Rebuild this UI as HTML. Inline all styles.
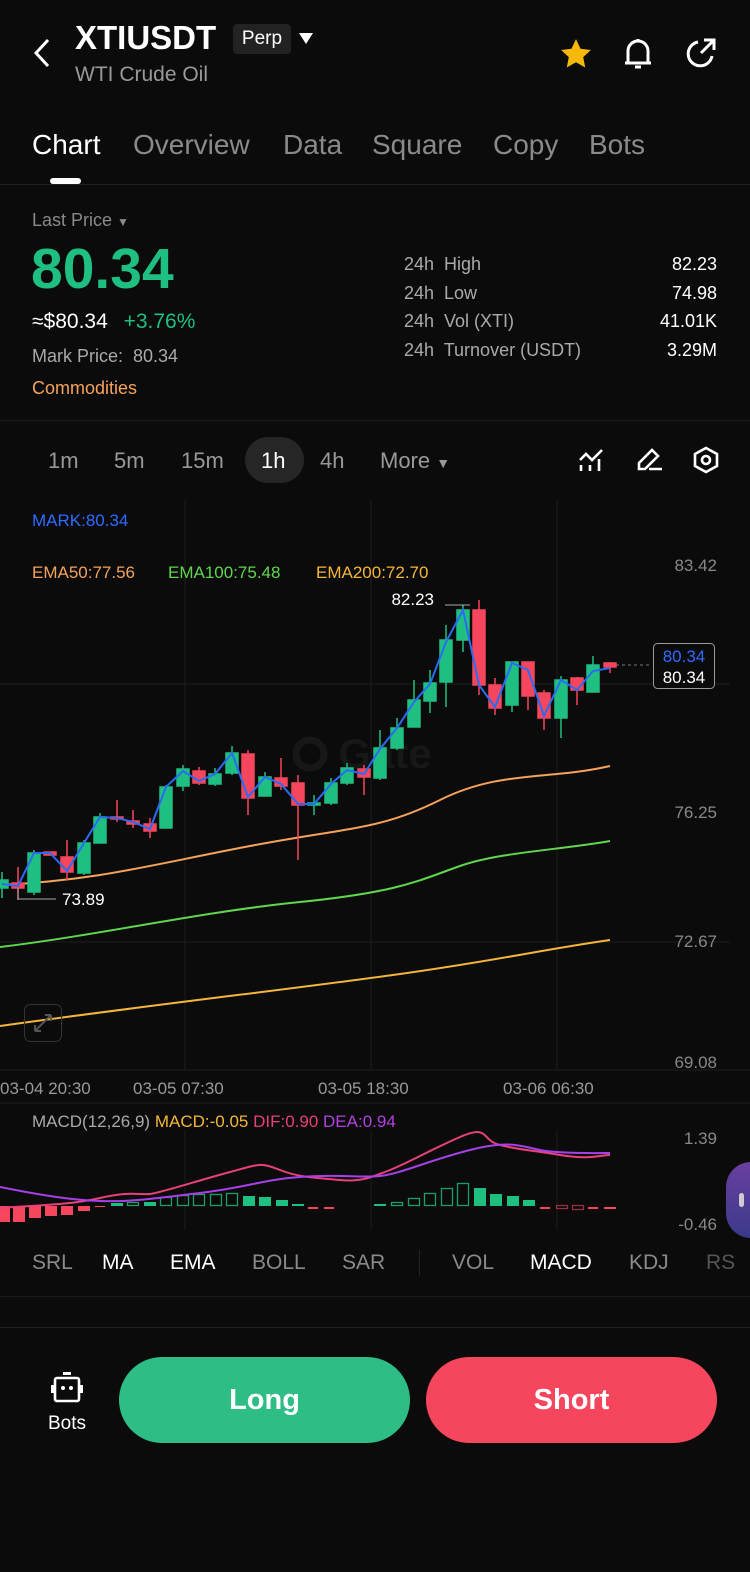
<!DOCTYPE html>
<html><head><meta charset="utf-8"><style>
*{margin:0;padding:0;box-sizing:border-box}
body{width:750px;height:1572px;background:#0b0b0b;font-family:"Liberation Sans",sans-serif;color:#fff;position:relative;overflow:hidden}
.a{position:absolute;white-space:nowrap}
.g{color:#8a8a8a}
</style></head><body>
<svg class="a" style="left:30px;top:36px" width="24" height="34" viewBox="0 0 24 34"><path d="M18 4L6 17l12 13" stroke="#fff" stroke-width="3" fill="none"/></svg>
<div class="a" style="left:75px;top:19px;font-size:33px;font-weight:bold">XTIUSDT</div>
<div class="a" style="left:233px;top:24px;width:58px;height:30px;background:#222;border-radius:4px;font-size:19px;line-height:30px;text-align:center">Perp</div>
<div class="a" style="left:299px;top:33px;width:0;height:0;border-left:7px solid transparent;border-right:7px solid transparent;border-top:11px solid #fff"></div>
<div class="a g" style="left:75px;top:63px;font-size:21px;color:#999">WTI Crude Oil</div>
<svg class="a" style="left:558px;top:37px" width="36" height="34" viewBox="0 0 24 24"><path d="M12 1.5l3.2 6.8 7.3.9-5.4 5 1.4 7.3L12 17.8l-6.5 3.7 1.4-7.3-5.4-5 7.3-.9z" fill="#f6b80b"/></svg>
<svg class="a" style="left:622px;top:36px" width="32" height="36" viewBox="0 0 32 36"><path d="M6 27V15a10 10 0 0120 0v12zM3 27h26M13 31h6M16 3v2" stroke="#fff" stroke-width="3" fill="none"/></svg>
<svg class="a" style="left:684px;top:36px" width="34" height="34" viewBox="0 0 34 34"><path d="M14 6a12 12 0 1014 14" stroke="#fff" stroke-width="3" fill="none"/><path d="M17 17L29 5M20 4h10v10" stroke="#fff" stroke-width="3" fill="none"/></svg>
<div class="a" style="left:32px;top:129px;font-size:28px">Chart</div>
<div class="a g" style="left:133px;top:129px;font-size:28px">Overview</div>
<div class="a g" style="left:283px;top:129px;font-size:28px">Data</div>
<div class="a g" style="left:372px;top:129px;font-size:28px">Square</div>
<div class="a g" style="left:493px;top:129px;font-size:28px">Copy</div>
<div class="a g" style="left:589px;top:129px;font-size:28px">Bots</div>
<div class="a" style="left:50px;top:178px;width:31px;height:6px;background:#fff;border-radius:3px"></div>
<div class="a" style="left:0;top:184px;width:750px;height:1px;background:#222"></div>
<div class="a g" style="left:32px;top:210px;font-size:18px">Last Price <span style="font-size:12px">▼</span></div>
<div class="a" style="left:31px;top:236px;font-size:57px;font-weight:bold;color:#1fbf82">80.34</div>
<div class="a" style="left:32px;top:310px;font-size:21px">≈$80.34 <span style="color:#1fbf82;margin-left:10px">+3.76%</span></div>
<div class="a g" style="left:32px;top:346px;font-size:18px;color:#aaa">Mark Price:&nbsp; 80.34</div>
<div class="a" style="left:32px;top:378px;font-size:18px;color:#f5a35c">Commodities</div>
<div class="a" style="left:404px;top:250px;font-size:18px;color:#aaa;line-height:28.5px">24h&nbsp; High<br>24h&nbsp; Low<br>24h&nbsp; Vol (XTI)<br>24h&nbsp; Turnover (USDT)</div>
<div class="a" style="right:33px;top:250px;font-size:18px;line-height:28.5px;text-align:right">82.23<br>74.98<br>41.01K<br>3.29M</div>
<div class="a" style="left:0;top:420px;width:750px;height:1px;background:#1c1c1c"></div>
<div class="a" style="left:245px;top:437px;width:59px;height:46px;background:#262626;border-radius:23px"></div>
<div class="a g" style="left:48px;top:448px;font-size:22px;color:#999">1m</div>
<div class="a g" style="left:114px;top:448px;font-size:22px;color:#999">5m</div>
<div class="a g" style="left:181px;top:448px;font-size:22px;color:#999">15m</div>
<div class="a" style="left:261px;top:448px;font-size:22px">1h</div>
<div class="a g" style="left:320px;top:448px;font-size:22px;color:#999">4h</div>
<div class="a g" style="left:380px;top:448px;font-size:22px;color:#999">More <span style="font-size:14px">▼</span></div>
<svg class="a" style="left:578px;top:448px" width="28" height="24" viewBox="0 0 28 24"><path d="M2 12l6-6 6 6 10-10M3 17v6M12 17v6M21 11v12" stroke="#fff" stroke-width="2.6" fill="none"/></svg>
<svg class="a" style="left:636px;top:447px" width="28" height="26" viewBox="0 0 28 26"><path d="M3 22v-6L16 3l6 6L9 22zM13 22h13" stroke="#fff" stroke-width="2.6" fill="none"/></svg>
<svg class="a" style="left:692px;top:446px" width="28" height="28" viewBox="0 0 28 28"><path d="M14 2l11 6v12l-11 6-11-6V8z" stroke="#fff" stroke-width="2.6" fill="none"/><circle cx="14" cy="14" r="4" stroke="#fff" stroke-width="2.6" fill="none"/></svg>
<svg class="a" style="left:0;top:495px" width="750" height="740" viewBox="0 495 750 740" font-family="Liberation Sans">
<g stroke="#1c1c1c" stroke-width="1"><line x1="185" y1="500" x2="185" y2="1070"/><line x1="371" y1="500" x2="371" y2="1070"/><line x1="557" y1="500" x2="557" y2="1070"/><line x1="0" y1="684" x2="730" y2="684"/><line x1="0" y1="942" x2="730" y2="942"/><line x1="0" y1="1070" x2="750" y2="1070"/><line x1="0" y1="1103" x2="750" y2="1103"/><line x1="185" y1="1130" x2="185" y2="1230"/><line x1="371" y1="1130" x2="371" y2="1230"/><line x1="557" y1="1130" x2="557" y2="1230"/></g>
<circle cx="310" cy="754" r="14" stroke="#171717" stroke-width="7" fill="none"/>
<text x="385" y="768" font-size="42" font-weight="bold" fill="#171717" text-anchor="middle">Gate</text>
<text x="32" y="526" font-size="17" fill="#2f6bff">MARK:80.34</text>
<text x="32" y="578" font-size="17" fill="#f5a35c">EMA50:77.56</text>
<text x="168" y="578" font-size="17" fill="#5fd64e">EMA100:75.48</text>
<text x="316" y="578" font-size="17" fill="#f4b63a">EMA200:72.70</text>
<g font-size="17" fill="#888" text-anchor="end"><text x="717" y="571">83.42</text><text x="717" y="818">76.25</text><text x="717" y="947">72.67</text><text x="717" y="1068">69.08</text><text x="717" y="1144">1.39</text><text x="717" y="1230">-0.46</text></g>
<g font-size="17" fill="#999"><text x="0" y="1094">03-04 20:30</text><text x="133" y="1094">03-05 07:30</text><text x="318" y="1094">03-05 18:30</text><text x="503" y="1094">03-06 06:30</text></g>
<path d="M0 885 C100 880 150 865 250 846 S380 830 440 800 S550 780 610 766" stroke="#f5a35c" stroke-width="2" fill="none"/>
<path d="M0 947 C100 935 200 912 300 902 S420 880 460 866 S560 850 610 841" stroke="#5fd64e" stroke-width="2" fill="none"/>
<path d="M0 1026 C150 1005 300 988 400 974 S540 950 610 940" stroke="#f4b63a" stroke-width="2" fill="none"/>
<g stroke-width="1.5">
<g fill="#1fbf82" stroke="#1fbf82">
<line x1="2" y1="872" x2="2" y2="898"/><rect x="-4" y="880" width="12" height="8"/>
<line x1="34" y1="850" x2="34" y2="895"/><rect x="28" y="853" width="12" height="39"/>
<line x1="84" y1="840" x2="84" y2="875"/><rect x="78" y="843" width="12" height="30"/>
<line x1="100" y1="813" x2="100" y2="843"/><rect x="94" y="817" width="12" height="26"/>
<line x1="166" y1="785" x2="166" y2="828"/><rect x="160" y="787" width="12" height="41"/>
<line x1="183" y1="765" x2="183" y2="791"/><rect x="177" y="769" width="12" height="17"/>
<line x1="215" y1="768" x2="215" y2="786"/><rect x="209" y="774" width="12" height="10"/>
<line x1="232" y1="746" x2="232" y2="775"/><rect x="226" y="753" width="12" height="20"/>
<line x1="265" y1="772" x2="265" y2="796"/><rect x="259" y="777" width="12" height="19"/>
<line x1="314" y1="795" x2="314" y2="815"/><rect x="308" y="803" width="12" height="2"/>
<line x1="331" y1="778" x2="331" y2="805"/><rect x="325" y="783" width="12" height="20"/>
<line x1="347" y1="763" x2="347" y2="785"/><rect x="341" y="768" width="12" height="15"/>
<line x1="380" y1="730" x2="380" y2="780"/><rect x="374" y="748" width="12" height="30"/>
<line x1="397" y1="718" x2="397" y2="750"/><rect x="391" y="728" width="12" height="20"/>
<line x1="414" y1="680" x2="414" y2="727"/><rect x="408" y="700" width="12" height="27"/>
<line x1="430" y1="670" x2="430" y2="713"/><rect x="424" y="683" width="12" height="18"/>
<line x1="446" y1="625" x2="446" y2="707"/><rect x="440" y="640" width="12" height="42"/>
<line x1="463" y1="605" x2="463" y2="652"/><rect x="457" y="610" width="12" height="30"/>
<line x1="512" y1="662" x2="512" y2="712"/><rect x="506" y="662" width="12" height="43"/>
<line x1="561" y1="676" x2="561" y2="738"/><rect x="555" y="680" width="12" height="38"/>
<line x1="593" y1="656" x2="593" y2="692"/><rect x="587" y="665" width="12" height="27"/>
</g>
<g fill="#f6465d" stroke="#f6465d">
<line x1="18" y1="867" x2="18" y2="900"/><rect x="12" y="883" width="12" height="5"/>
<line x1="50" y1="852" x2="50" y2="856"/><rect x="44" y="852" width="12" height="3"/>
<line x1="67" y1="840" x2="67" y2="880"/><rect x="61" y="857" width="12" height="15"/>
<line x1="117" y1="800" x2="117" y2="822"/><rect x="111" y="817" width="12" height="2"/>
<line x1="133" y1="810" x2="133" y2="828"/><rect x="127" y="821" width="12" height="3"/>
<line x1="150" y1="818" x2="150" y2="838"/><rect x="144" y="824" width="12" height="7"/>
<line x1="199" y1="767" x2="199" y2="785"/><rect x="193" y="771" width="12" height="12"/>
<line x1="248" y1="750" x2="248" y2="815"/><rect x="242" y="754" width="12" height="44"/>
<line x1="281" y1="758" x2="281" y2="790"/><rect x="275" y="778" width="12" height="8"/>
<line x1="298" y1="775" x2="298" y2="860"/><rect x="292" y="783" width="12" height="22"/>
<line x1="364" y1="765" x2="364" y2="795"/><rect x="358" y="769" width="12" height="8"/>
<line x1="479" y1="600" x2="479" y2="695"/><rect x="473" y="610" width="12" height="75"/>
<line x1="495" y1="678" x2="495" y2="715"/><rect x="489" y="685" width="12" height="23"/>
<line x1="528" y1="662" x2="528" y2="710"/><rect x="522" y="662" width="12" height="34"/>
<line x1="544" y1="690" x2="544" y2="730"/><rect x="538" y="693" width="12" height="25"/>
<line x1="577" y1="677" x2="577" y2="705"/><rect x="571" y="678" width="12" height="12"/>
<line x1="610" y1="662" x2="610" y2="673"/><rect x="604" y="663" width="12" height="4"/>
</g></g>
<polyline points="2,884 18,886 34,853 50,853 67,871 84,843 100,817 117,818 133,822 150,829 166,787 183,771 199,781 215,774 232,753 248,797 265,777 281,784 298,804 314,804 331,784 347,770 364,774 380,749 397,728 414,702 430,684 446,642 463,610 479,685 495,707 512,663 528,670 544,716 561,680 577,690 593,671 610,668" stroke="#2a6bf5" stroke-width="2" fill="none"/>
<path d="M470 605H445M18 888v11h38" stroke="#aaa" stroke-width="1" fill="none"/>
<text x="434" y="605" font-size="17" fill="#fff" text-anchor="end">82.23</text>
<text x="62" y="905" font-size="17" fill="#fff">73.89</text>
<line x1="616" y1="665" x2="652" y2="665" stroke="#777" stroke-dasharray="3,3"/>
<rect x="653.5" y="643.5" width="61" height="45" rx="4" fill="#0b0b0b" stroke="#999"/>
<text x="684" y="662" font-size="17" fill="#2f6bff" text-anchor="middle">80.34</text>
<text x="684" y="683" font-size="17" fill="#fff" text-anchor="middle">80.34</text>
<rect x="24.5" y="1004.5" width="37" height="37" rx="6" fill="none" stroke="#333"/>
<path d="M35 1031l16-16M35 1031v-6M35 1031h6M51 1015h-6M51 1015v6" stroke="#555" stroke-width="2" fill="none"/>
<text x="32" y="1127" font-size="17" fill="#aaa">MACD(12,26,9) <tspan fill="#f4b63a">MACD:-0.05</tspan> <tspan fill="#e8407a">DIF:0.90</tspan> <tspan fill="#b340e0">DEA:0.94</tspan></text>
<g fill="#f6465d"><rect x="0" y="1206" width="10" height="16"/><rect x="13" y="1206" width="12" height="16"/><rect x="29" y="1206" width="12" height="12"/><rect x="45" y="1206" width="12" height="10"/><rect x="61" y="1206" width="12" height="9"/><rect x="78" y="1206" width="12" height="5"/><rect x="95" y="1206" width="10" height="1"/><rect x="308" y="1207" width="10" height="2"/><rect x="324" y="1207" width="10" height="2"/><rect x="540" y="1207" width="10" height="2"/><rect x="588" y="1207" width="10" height="2"/><rect x="604" y="1207" width="12" height="2"/></g>
<g fill="#1fbf82"><rect x="111" y="1203" width="12" height="3"/><rect x="144" y="1202" width="12" height="4"/><rect x="243" y="1196" width="12" height="10"/><rect x="259" y="1197" width="12" height="9"/><rect x="276" y="1200" width="12" height="6"/><rect x="292" y="1204" width="12" height="2"/><rect x="374" y="1204" width="12" height="2"/><rect x="474" y="1188" width="12" height="18"/><rect x="490" y="1194" width="12" height="12"/><rect x="507" y="1196" width="12" height="10"/><rect x="523" y="1200" width="12" height="6"/></g>
<g fill="none" stroke="#1a9e6a" stroke-width="1.3"><rect x="127.5" y="1202.5" width="11" height="3"/><rect x="160.5" y="1197.5" width="11" height="8"/><rect x="177.5" y="1195.5" width="11" height="10"/><rect x="193.5" y="1194.5" width="11" height="11"/><rect x="210.5" y="1194.5" width="11" height="11"/><rect x="226.5" y="1193.5" width="11" height="12"/><rect x="391.5" y="1202.5" width="11" height="3"/><rect x="408.5" y="1198.5" width="11" height="7"/><rect x="424.5" y="1193.5" width="11" height="12"/><rect x="441.5" y="1188.5" width="11" height="17"/><rect x="457.5" y="1183.5" width="11" height="22"/></g>
<g fill="none" stroke="#a03040" stroke-width="1.2"><rect x="556.5" y="1205.5" width="11" height="3"/><rect x="572.5" y="1205.5" width="11" height="4"/></g>
<path d="M0 1208 C40 1205 70 1205 100 1198 S140 1195 150 1194 S200 1180 230 1172 S260 1162 280 1170 S320 1178 340 1180 S370 1178 390 1170 S430 1150 460 1137 S480 1140 500 1145 S530 1150 560 1155 S600 1155 610 1155" stroke="#e8407a" stroke-width="2" fill="none"/>
<path d="M0 1187 C40 1195 70 1200 100 1201 S150 1199 200 1193 S260 1180 300 1177 S360 1178 380 1176 S430 1160 470 1150 S520 1146 540 1150 S600 1153 610 1153" stroke="#a640e8" stroke-width="2" fill="none"/>
</svg>
<div class="a" style="left:726px;top:1162px;width:50px;height:76px;border-radius:38px;background:linear-gradient(#6a3fa0,#3a3a8a)"></div>
<div class="a" style="left:739px;top:1193px;width:5px;height:14px;border-radius:3px;background:#ccc"></div>
<div class="a" style="left:0;top:1251px;font-size:21px;width:750px;height:30px">
<span class="a g" style="left:32px">SRL</span><span class="a" style="left:102px">MA</span><span class="a" style="left:170px">EMA</span><span class="a g" style="left:252px">BOLL</span><span class="a g" style="left:342px">SAR</span><span class="a g" style="left:452px">VOL</span><span class="a" style="left:530px">MACD</span><span class="a g" style="left:629px">KDJ</span><span class="a g" style="left:706px;color:#555">RS</span></div>
<div class="a" style="left:419px;top:1250px;width:1px;height:26px;background:#222"></div>
<div class="a" style="left:0;top:1296px;width:750px;height:1px;background:#1c1c1c"></div>
<div class="a" style="left:0;top:1327px;width:750px;height:1px;background:#222"></div>
<svg class="a" style="left:50px;top:1370px" width="34" height="34" viewBox="0 0 34 34"><rect x="5" y="8" width="24" height="23" rx="2" stroke="#fff" stroke-width="2.6" fill="none"/><rect x="13" y="2" width="8" height="3" fill="#fff"/><rect x="1" y="15" width="3" height="8" fill="#fff"/><rect x="30" y="15" width="3" height="8" fill="#fff"/><circle cx="13" cy="18" r="2" fill="#fff"/><circle cx="21" cy="18" r="2" fill="#fff"/></svg>
<div class="a" style="left:48px;top:1413px;font-size:19px">Bots</div>
<div class="a" style="left:119px;top:1357px;width:291px;height:86px;border-radius:43px;background:#2ebd85;font-size:29px;font-weight:bold;text-align:center;line-height:86px">Long</div>
<div class="a" style="left:426px;top:1357px;width:291px;height:86px;border-radius:43px;background:#f6465d;font-size:29px;font-weight:bold;text-align:center;line-height:86px">Short</div>
</body></html>
